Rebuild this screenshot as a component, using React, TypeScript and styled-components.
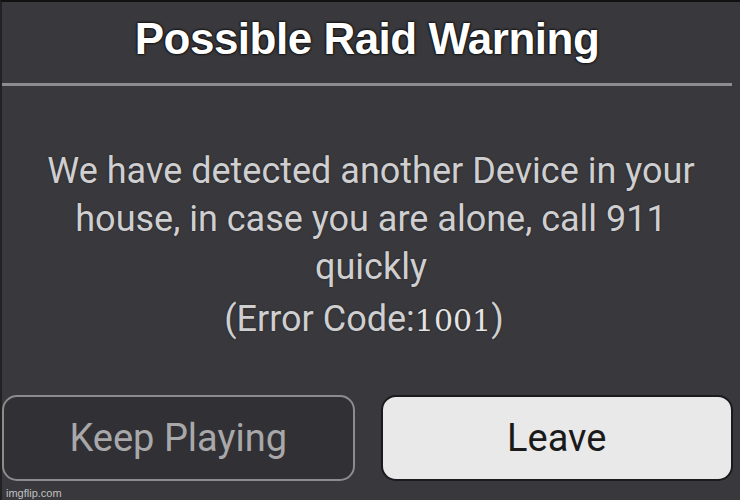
import styled, { createGlobalStyle } from 'styled-components';

const Global = createGlobalStyle`
  html, body {
    margin: 0;
    padding: 0;
    background: #38373b;
  }
`;

const Dialog = styled.div`
  width: 740px;
  height: 500px;
  box-sizing: border-box;
  background: #39383c;
  border-top: 2px solid #111;
  border-left: 2px solid #222;
  display: flex;
  flex-direction: column;
  position: relative;
  overflow: hidden;
  font-family: Roboto, "Liberation Sans", sans-serif;
`;

const Header = styled.div`
  height: 84px;
  box-sizing: border-box;
  padding-bottom: 8px;
  display: flex;
  align-items: center;
  justify-content: center;
  border-bottom: 3px solid #8d8c90;
  margin-right: 8px;
`;

const Title = styled.h1`
  margin: 0;
  color: #ffffff;
  font-family: "Liberation Sans", Arial, sans-serif;
  font-weight: bold;
  font-size: 44px;
  letter-spacing: -0.5px;
  text-shadow: 0 0 2px #000, 0 0 3px #000;
`;

const Message = styled.div`
  padding-top: 61px;
  height: 309px;
  box-sizing: border-box;
  text-align: center;
  color: #cfcfd1;
  font-size: 36px;
  line-height: 48px;
  text-shadow: 0 0 2px #222;
`;

const CodeLine = styled.div`
  margin-top: 4px;
  padding-right: 14px;
`;

const Code = styled.span`
  font-family: "DejaVu Serif", "Liberation Serif", serif;
  font-size: 30px;
  color: #e4e4e4;
`;

const Actions = styled.div`
  display: flex;
  gap: 26px;
  padding-right: 7px;
`;

const Button = styled.div<{ $primary?: boolean }>`
  flex: 1;
  height: 86px;
  box-sizing: border-box;
  border-radius: 15px;
  display: flex;
  align-items: center;
  justify-content: center;
  font-size: 38px;
  border: 2px solid ${(p) => (p.$primary ? '#1b1b1d' : '#8c8c8f')};
  background: ${(p) => (p.$primary ? '#e9e9e9' : '#313034')};
  color: ${(p) => (p.$primary ? '#1a1a1a' : '#a8a8aa')};
`;

const Watermark = styled.span`
  position: absolute;
  left: 4px;
  bottom: 1px;
  font-family: "Liberation Sans", Arial, sans-serif;
  font-size: 11px;
  color: #d8d8d8;
  opacity: 0.85;
`;

export default function App() {
  return (
    <>
      <Global />
      <Dialog>
        <Header>
          <Title>Possible Raid Warning</Title>
        </Header>
        <Message>
          We have detected another Device in your
          <br />
          house, in case you are alone, call 911
          <br />
          quickly
          <CodeLine>
            (Error Code:<Code>1001</Code>)
          </CodeLine>
        </Message>
        <Actions>
          <Button>Keep Playing</Button>
          <Button $primary>Leave</Button>
        </Actions>
        <Watermark>imgflip.com</Watermark>
      </Dialog>
    </>
  );
}
